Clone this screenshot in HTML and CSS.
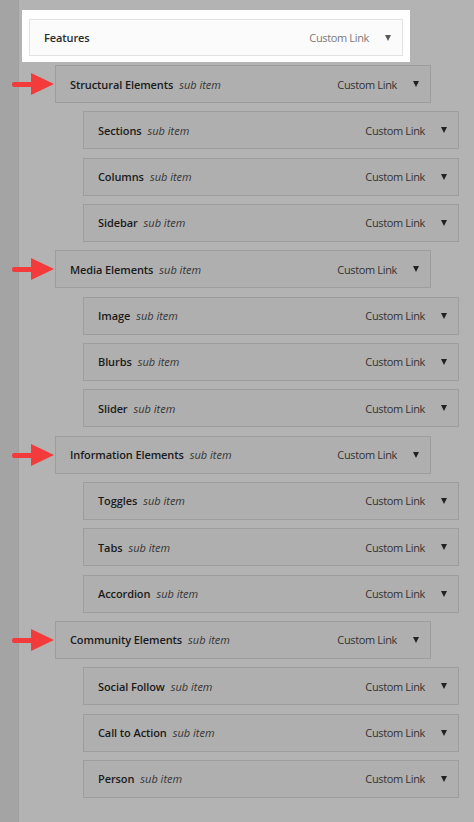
FILE: index.html
```html
<!DOCTYPE html>
<html>
<head>
<meta charset="utf-8">
<link rel="stylesheet" href="styles.css">
</head>
<body>
<div class="page">
  <div class="strip"></div>
  <div class="main">
    <div class="highlight">
      <div class="item item-top">
        <span class="title">Features</span>
        <span class="type">Custom Link</span>
        <span class="caret"></span>
      </div>
    </div>
    <ul class="menu">
      <li class="item lvl1"><span class="pointer"></span><span class="title">Structural Elements</span><span class="sub">sub item</span><span class="type">Custom Link</span><span class="caret"></span></li>
      <li class="item lvl2"><span class="title">Sections</span><span class="sub">sub item</span><span class="type">Custom Link</span><span class="caret"></span></li>
      <li class="item lvl2"><span class="title">Columns</span><span class="sub">sub item</span><span class="type">Custom Link</span><span class="caret"></span></li>
      <li class="item lvl2"><span class="title">Sidebar</span><span class="sub">sub item</span><span class="type">Custom Link</span><span class="caret"></span></li>
      <li class="item lvl1"><span class="pointer"></span><span class="title">Media Elements</span><span class="sub">sub item</span><span class="type">Custom Link</span><span class="caret"></span></li>
      <li class="item lvl2"><span class="title">Image</span><span class="sub">sub item</span><span class="type">Custom Link</span><span class="caret"></span></li>
      <li class="item lvl2"><span class="title">Blurbs</span><span class="sub">sub item</span><span class="type">Custom Link</span><span class="caret"></span></li>
      <li class="item lvl2"><span class="title">Slider</span><span class="sub">sub item</span><span class="type">Custom Link</span><span class="caret"></span></li>
      <li class="item lvl1"><span class="pointer"></span><span class="title">Information Elements</span><span class="sub">sub item</span><span class="type">Custom Link</span><span class="caret"></span></li>
      <li class="item lvl2"><span class="title">Toggles</span><span class="sub">sub item</span><span class="type">Custom Link</span><span class="caret"></span></li>
      <li class="item lvl2"><span class="title">Tabs</span><span class="sub">sub item</span><span class="type">Custom Link</span><span class="caret"></span></li>
      <li class="item lvl2"><span class="title">Accordion</span><span class="sub">sub item</span><span class="type">Custom Link</span><span class="caret"></span></li>
      <li class="item lvl1"><span class="pointer"></span><span class="title">Community Elements</span><span class="sub">sub item</span><span class="type">Custom Link</span><span class="caret"></span></li>
      <li class="item lvl2"><span class="title">Social Follow</span><span class="sub">sub item</span><span class="type">Custom Link</span><span class="caret"></span></li>
      <li class="item lvl2"><span class="title">Call to Action</span><span class="sub">sub item</span><span class="type">Custom Link</span><span class="caret"></span></li>
      <li class="item lvl2"><span class="title">Person</span><span class="sub">sub item</span><span class="type">Custom Link</span><span class="caret"></span></li>
    </ul>
  </div>
</div>
</body>
</html>
```

FILE: styles.css
```css
* { box-sizing: border-box; }
html, body { margin: 0; padding: 0; }
body {
  background: #b3b3b3;
  font-family: "Open Sans", "Noto Sans", sans-serif;
  font-size: 11px;
  color: #1b1b1b;
}
.page {
  display: flex;
  min-height: 822px;
}
.strip {
  width: 19px;
  flex: none;
  background: #a4a4a4;
  border-right: 1px solid #a0a0a0;
}
.main {
  flex: 1;
  padding-top: 10px;
  padding-left: 3px;
}
.highlight {
  width: 388px;
  background: #ffffff;
  padding: 9px 7px 6px 7px;
}
.menu {
  list-style: none;
  margin: 3px 0 0 0;
  padding: 0;
}
.item {
  position: relative;
  display: flex;
  align-items: center;
  height: 38px;
  padding: 0 11px 0 14px;
  border: 1px solid #9d9d9d;
  background: #afafaf;
  margin-bottom: 8.33px;
}
.item-top {
  height: 37px;
  margin: 0;
  background: #fbfbfb;
  border-color: #e3e3e3;
  color: #2a2a2a;
}
.lvl1 { margin-left: 33px; width: 376px; }
.lvl2 { margin-left: 61px; width: 376px; }
.title {
  font-weight: 600;
  letter-spacing: -0.1px;
}
.sub {
  font-style: italic;
  margin-left: 6px;
  color: #353535;
}
.type {
  margin-left: auto;
  color: #333333;
  letter-spacing: -0.35px;
}
.item-top .type { color: #7a7a7a; }
.caret {
  width: 0;
  height: 0;
  margin-left: 16px;
  border-left: 3.5px solid transparent;
  border-right: 3.5px solid transparent;
  border-top: 6px solid #222222;
}
.item-top .caret { border-top-color: #5a5a5a; }
.pointer {
  position: absolute;
  left: -44px;
  top: 7px;
  width: 43px;
  height: 23px;
}
.pointer::before {
  content: "";
  position: absolute;
  left: 0;
  top: 9px;
  width: 22px;
  height: 5px;
  border-radius: 2px;
  background: #f33b3b;
}
.pointer::after {
  content: "";
  position: absolute;
  left: 19px;
  top: 0;
  width: 0;
  height: 0;
  border-top: 11.5px solid transparent;
  border-bottom: 11.5px solid transparent;
  border-left: 23px solid #f33b3b;
}
```
